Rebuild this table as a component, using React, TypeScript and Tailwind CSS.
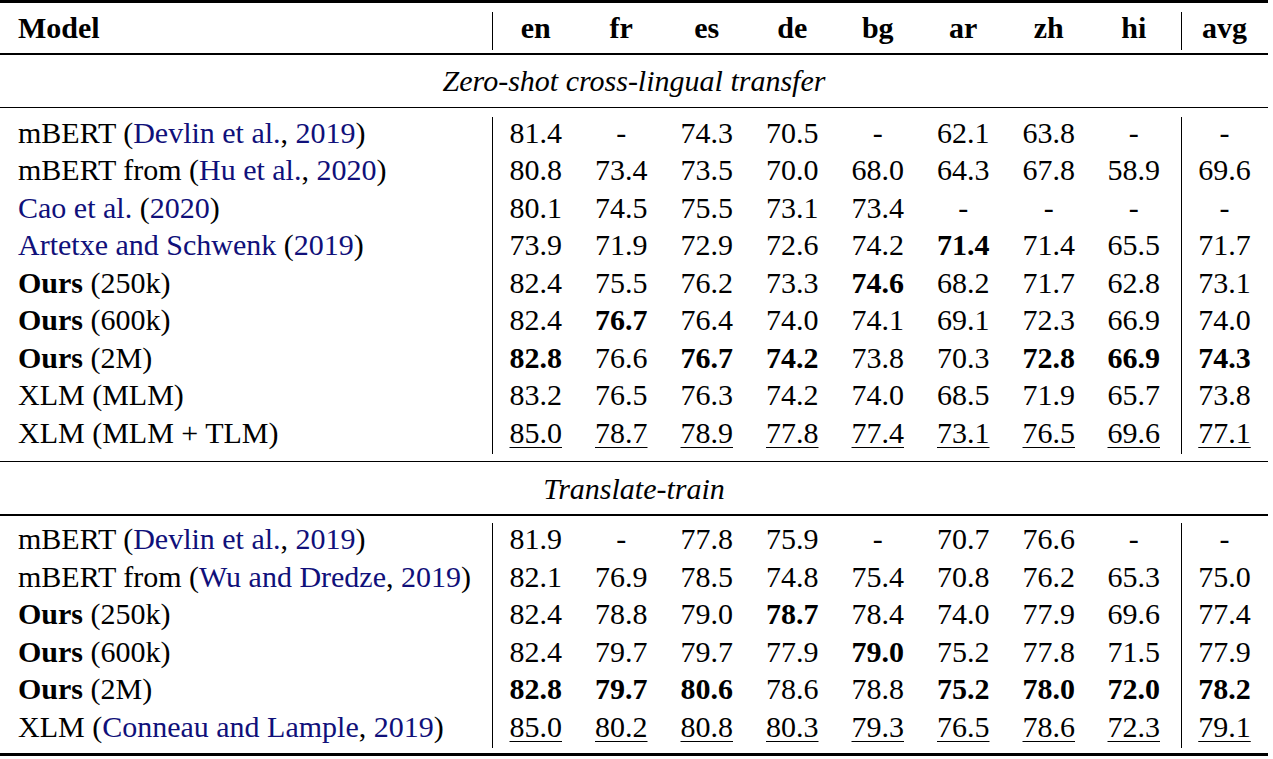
import React from "react";

type Cell = { v: string; b?: boolean; u?: boolean };
type Part = { t: string; link?: boolean; bold?: boolean };
type Row = { name: Part[]; cells: Cell[] };

const c = (s: string): Cell[] =>
  s.split(" ").map((x) => ({
    v: x.replace(/[*_]/g, ""),
    b: x.startsWith("*"),
    u: x.startsWith("_"),
  }));

const cite = (pre: string, a: string, y: string): Part[] => [
  { t: pre + " (" },
  { t: a, link: true },
  { t: ", " },
  { t: y, link: true },
  { t: ")" },
];

const citeT = (a: string, y: string): Part[] => [
  { t: a, link: true },
  { t: " (" },
  { t: y, link: true },
  { t: ")" },
];

const ours = (size: string): Part[] => [{ t: "Ours", bold: true }, { t: ` (${size})` }];

const zeroShot: Row[] = [
  { name: cite("mBERT", "Devlin et al.", "2019"), cells: c("81.4 - 74.3 70.5 - 62.1 63.8 - -") },
  { name: cite("mBERT from", "Hu et al.", "2020"), cells: c("80.8 73.4 73.5 70.0 68.0 64.3 67.8 58.9 69.6") },
  { name: citeT("Cao et al.", "2020"), cells: c("80.1 74.5 75.5 73.1 73.4 - - - -") },
  { name: citeT("Artetxe and Schwenk", "2019"), cells: c("73.9 71.9 72.9 72.6 74.2 *71.4 71.4 65.5 71.7") },
  { name: ours("250k"), cells: c("82.4 75.5 76.2 73.3 *74.6 68.2 71.7 62.8 73.1") },
  { name: ours("600k"), cells: c("82.4 *76.7 76.4 74.0 74.1 69.1 72.3 66.9 74.0") },
  { name: ours("2M"), cells: c("*82.8 76.6 *76.7 *74.2 73.8 70.3 *72.8 *66.9 *74.3") },
  { name: [{ t: "XLM (MLM)" }], cells: c("83.2 76.5 76.3 74.2 74.0 68.5 71.9 65.7 73.8") },
  { name: [{ t: "XLM (MLM + TLM)" }], cells: c("_85.0 _78.7 _78.9 _77.8 _77.4 _73.1 _76.5 _69.6 _77.1") },
];

const translateTrain: Row[] = [
  { name: cite("mBERT", "Devlin et al.", "2019"), cells: c("81.9 - 77.8 75.9 - 70.7 76.6 - -") },
  { name: cite("mBERT from", "Wu and Dredze", "2019"), cells: c("82.1 76.9 78.5 74.8 75.4 70.8 76.2 65.3 75.0") },
  { name: ours("250k"), cells: c("82.4 78.8 79.0 *78.7 78.4 74.0 77.9 69.6 77.4") },
  { name: ours("600k"), cells: c("82.4 79.7 79.7 77.9 *79.0 75.2 77.8 71.5 77.9") },
  { name: ours("2M"), cells: c("*82.8 *79.7 *80.6 78.6 78.8 *75.2 *78.0 *72.0 *78.2") },
  { name: cite("XLM", "Conneau and Lample", "2019"), cells: c("_85.0 _80.2 _80.8 _80.3 _79.3 _76.5 _78.6 _72.3 _79.1") },
];

const langs = ["en", "fr", "es", "de", "bg", "ar", "zh", "hi"];

const numCls = (i: number) =>
  i === 7
    ? "w-[90px] pr-[4.5px] border-r border-black text-center"
    : i === 8
    ? "w-[86px] text-center"
    : "w-[85.5px] text-center";

const DataRow = ({ row }: { row: Row }) => (
  <div className="flex h-[37.5px] leading-[32px]">
    <div className="w-[493px] pl-[18px] border-r border-black whitespace-nowrap">
      {row.name.map((p, i) => (
        <span key={i} className={p.link ? "text-[#10107a]" : p.bold ? "font-bold" : ""}>
          {p.t}
        </span>
      ))}
    </div>
    {row.cells.map((cell, i) => (
      <div key={i} className={numCls(i)}>
        <span
          className={
            (cell.b ? "font-bold " : "") +
            (cell.u ? "underline decoration-1 underline-offset-[4px]" : "")
          }
        >
          {cell.v}
        </span>
      </div>
    ))}
  </div>
);

const SectionTitle = ({ title }: { title: string }) => (
  <>
    <div className="h-[1.5px] bg-black" />
    <div className="h-[52px] flex items-center justify-center italic">{title}</div>
    <div className="h-[1.5px] bg-black" />
  </>
);

export default function App() {
  return (
    <div className="w-[1273px] h-[759px] bg-white text-black text-[30px] font-serif">
      <div className="w-[1268px] font-['Liberation_Serif','Times_New_Roman','DejaVu_Serif',serif]">
        <div className="h-[3px] bg-black" />
        <div className="mt-[9px] mb-[3px] flex h-[38px] leading-[32px] font-bold">
          <div className="w-[493px] pl-[18px] border-r border-black">Model</div>
          {langs.map((l, i) => (
            <div key={l} className={numCls(i)}>
              {l}
            </div>
          ))}
          <div className={numCls(8)}>avg</div>
        </div>

        <SectionTitle title="Zero-shot cross-lingual transfer" />
        <div className="pt-[8.5px] pb-[6.5px]">
          {zeroShot.map((r, i) => (
            <DataRow key={i} row={r} />
          ))}
        </div>

        <SectionTitle title="Translate-train" />
        <div className="pt-[7.5px] pb-[5px]">
          {translateTrain.map((r, i) => (
            <DataRow key={i} row={r} />
          ))}
        </div>
        <div className="h-[3px] bg-black" />
      </div>
    </div>
  );
}
